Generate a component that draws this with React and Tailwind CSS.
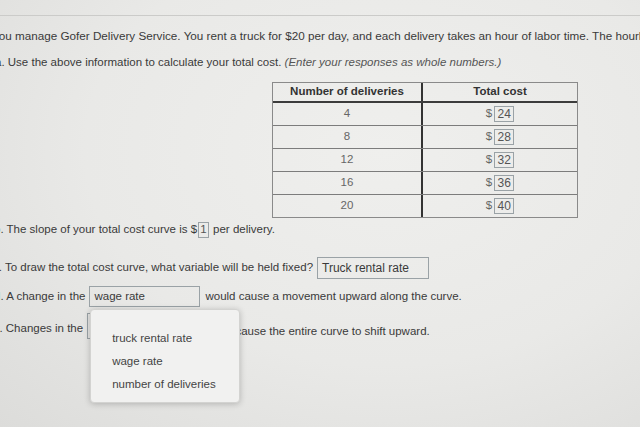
import React from 'react';

const rows = [
  { n: 4, cost: 24 },
  { n: 8, cost: 28 },
  { n: 12, cost: 32 },
  { n: 16, cost: 36 },
  { n: 20, cost: 40 },
];

const options = ['truck rental rate', 'wage rate', 'number of deliveries'];

const App = () => {
  return (
    <div className="w-[640px] h-[427px] overflow-hidden bg-[radial-gradient(ellipse_at_60%_35%,#efefed_0%,#e9e9e7_55%,#dcdcda_100%)] font-['Liberation_Sans',Arial,sans-serif] text-[11.5px] text-[#3a3a3a]">
      <div className="h-[16px] border-b border-[#cbcbc9]" />

      {/* question stem */}
      <p className="mt-[12px] -ml-[8px] leading-[16px] whitespace-nowrap text-[11.7px]">
        You manage Gofer Delivery Service. You rent a truck for $20 per day, and each delivery takes an hour of labor time. The hourly wage is $1.
      </p>
      <p className="mt-[10px] -ml-[5px] leading-[16px] whitespace-nowrap">
        a. Use the above information to calculate your total cost. <i className="text-[#555]">(Enter your responses as whole numbers.)</i>
      </p>

      {/* cost table */}
      <div className="ml-[272px] mt-[12px] w-[306px] border border-[#8a8a8a]">
        <div className="flex h-[20px] border-b-2 border-[#3c3c3c] font-bold text-[#333]">
          <div className="w-[150px] border-r-2 border-[#333] flex items-center justify-center">Number of deliveries</div>
          <div className="flex-1 flex items-center justify-center">Total cost</div>
        </div>
        {rows.map((r, i) => (
          <div key={r.n} className={`flex ${i < rows.length - 1 ? 'h-[23px] border-b border-[#7c7c7c]' : 'h-[22px]'}`}>
            <div className="w-[150px] border-r-2 border-[#333] flex items-center justify-center text-[#666]">{r.n}</div>
            <div className="flex-1 flex items-center justify-center text-[#666]">
              <span className="mr-[2px]">$</span>
              <span className="h-[16px] w-[20px] border border-[#9aa2a6] flex items-center justify-center text-[#555] text-[12px]">{r.cost}</span>
            </div>
          </div>
        ))}
      </div>

      {/* b */}
      <div className="mt-[3px] -ml-[6px] h-[17px] flex items-center whitespace-nowrap">
        <span>b. The slope of your total cost curve is $</span>
        <span className="ml-[1px] h-[16px] w-[11px] border border-[#9aa2a6] flex items-center justify-center text-[#555]">1</span>
        <span className="ml-[4px]">per delivery.</span>
      </div>

      {/* c */}
      <div className="mt-[19px] -ml-[7px] h-[22px] flex items-center whitespace-nowrap">
        <span>c. To draw the total cost curve, what variable will be held fixed?</span>
        <span className="ml-[4px] h-[22px] w-[112px] border border-[#9aa2a6] flex items-center pl-[4px] text-[12px] text-[#3a3a3a]">Truck rental rate</span>
      </div>

      {/* d */}
      <div className="mt-[7px] -ml-[6px] h-[21px] flex items-center whitespace-nowrap">
        <span>d. A change in the</span>
        <span className="ml-[4px] h-[21px] w-[111px] border border-[#9aa2a6] flex items-center pl-[4px] text-[#3a3a3a]">wage rate</span>
        <span className="ml-[5px]">would cause a movement upward along the curve.</span>
      </div>

      {/* e */}
      <div className="mt-[6px] -ml-[7px] flex items-start whitespace-nowrap">
        <span className="pt-[7px] leading-[16px]">e. Changes in the</span>
        <div className="relative ml-[4px] h-[26px] w-[112px] border border-[#9aa2a6]">
          <div className="absolute left-[2px] top-[-5px] w-[150px] rounded-[4px] border border-[#d3d3d1] bg-[#f1f1f0] pt-[17px] pb-[6px] shadow-[0_1px_6px_rgba(0,0,0,0.22)] z-10">
            {options.map((o) => (
              <div key={o} className="h-[23px] pl-[21px] flex items-center text-[#444]">{o}</div>
            ))}
          </div>
        </div>
        <span className="ml-[3px] pt-[10px] leading-[16px]">would cause the entire curve to shift upward.</span>
      </div>
    </div>
  );
};

export default App;
